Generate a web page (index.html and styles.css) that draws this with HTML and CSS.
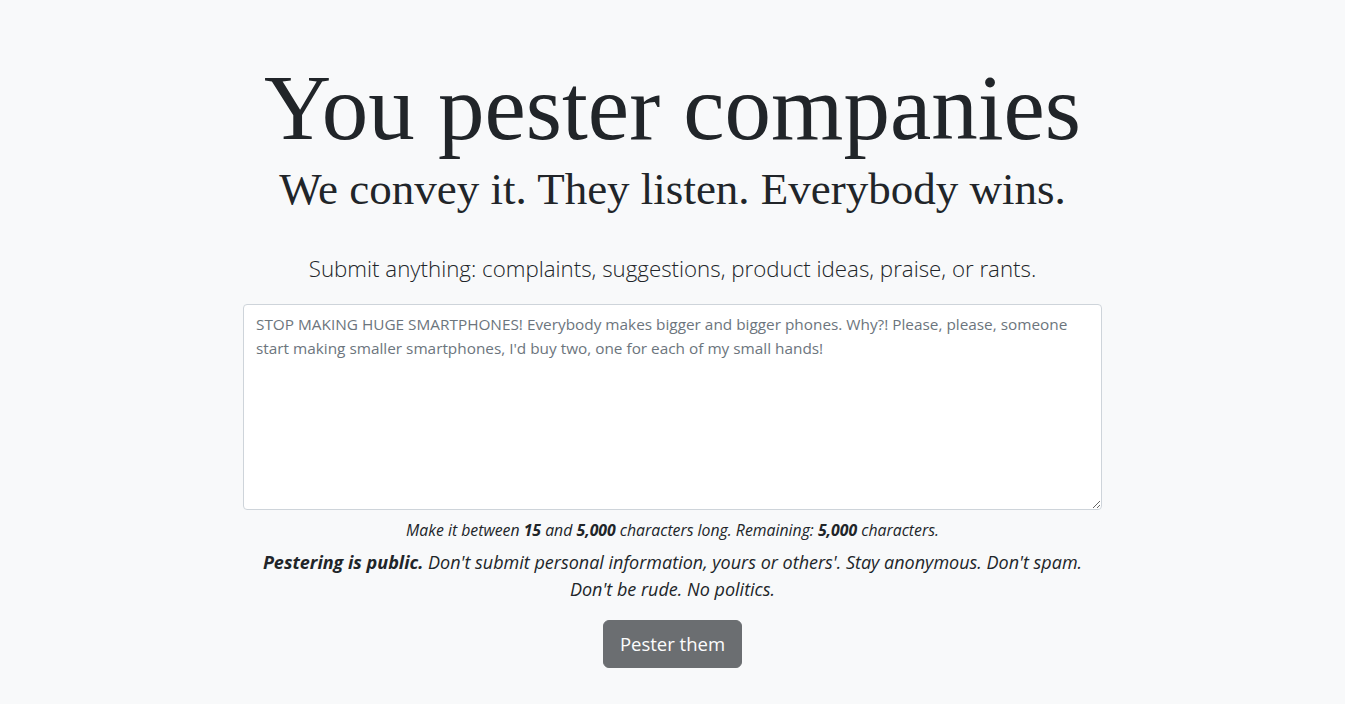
FILE: index.html
```html
<!DOCTYPE html>
<html lang="en">
<head>
    <meta charset="UTF-8">
    <meta name="viewport" content="width=device-width, initial-scale=1.0">
    <title>You pester companies</title>
    <link rel="stylesheet" href="styles.css">
</head>
<body>
    <main class="page">
        <header class="hero">
            <h1 class="hero-title">You pester companies</h1>
            <h2 class="hero-subtitle">We convey it. They listen. Everybody wins.</h2>
        </header>

        <p class="lead">Submit anything: complaints, suggestions, product ideas, praise, or rants.</p>

        <form class="pester-form">
            <textarea class="pester-input" placeholder="STOP MAKING HUGE SMARTPHONES! Everybody makes bigger and bigger phones. Why?! Please, please, someone start making smaller smartphones, I'd buy two, one for each of my small hands!"></textarea>
            <p class="hint">Make it between <b>15</b> and <b>5,000</b> characters long. Remaining: <b>5,000</b> characters.</p>
            <p class="rules"><b>Pestering is public.</b> Don't submit personal information, yours or others'. Stay anonymous. Don't spam. Don't be rude. No politics.</p>
            <button type="button" class="btn" disabled>Pester them</button>
        </form>
    </main>
</body>
</html>
```

FILE: styles.css
```css
* {
    margin: 0;
    padding: 0;
    box-sizing: border-box;
}

body {
    font-family: 'Open Sans', sans-serif;
    background: #f8f9fa;
    color: #212529;
}

.page {
    max-width: 859px;
    margin: 0 auto;
    padding-top: 55px;
    display: flex;
    flex-direction: column;
    align-items: center;
    text-align: center;
}

/* Headline */
.hero-title {
    font-family: 'Liberation Serif', serif;
    font-weight: 400;
    font-size: 93px;
    line-height: 1.15;
    white-space: nowrap;
}

.hero-subtitle {
    font-family: 'Liberation Serif', serif;
    font-weight: 400;
    font-size: 45px;
    line-height: 1.2;
    white-space: nowrap;
}

.lead {
    font-size: 22.3px;
    font-weight: 300;
    line-height: 33px;
    color: #212529;
    margin-top: 36px;
    margin-bottom: 19px;
}

/* Form */
.pester-form {
    width: 100%;
    display: flex;
    flex-direction: column;
    align-items: center;
}

.pester-input {
    width: 100%;
    height: 206px;
    padding: 7px 12px;
    font-family: 'Open Sans', sans-serif;
    font-size: 15.35px;
    line-height: 24px;
    color: #212529;
    background: #fff;
    border: 1px solid #ced4da;
    border-radius: 4px;
    resize: vertical;
}

.pester-input::placeholder {
    color: #6c757d;
}

.hint {
    font-size: 15.8px;
    font-style: italic;
    line-height: 21px;
    margin-top: 10px;
}

.rules {
    font-size: 18px;
    font-style: italic;
    line-height: 27px;
    margin-top: 8px;
}

.btn {
    margin-top: 17px;
    padding: 8px 16px;
    font-family: 'Open Sans', sans-serif;
    font-size: 18.5px;
    line-height: 30px;
    color: #fff;
    background: #212529;
    border: 1px solid #212529;
    border-radius: 6px;
    opacity: 0.65;
}
```
